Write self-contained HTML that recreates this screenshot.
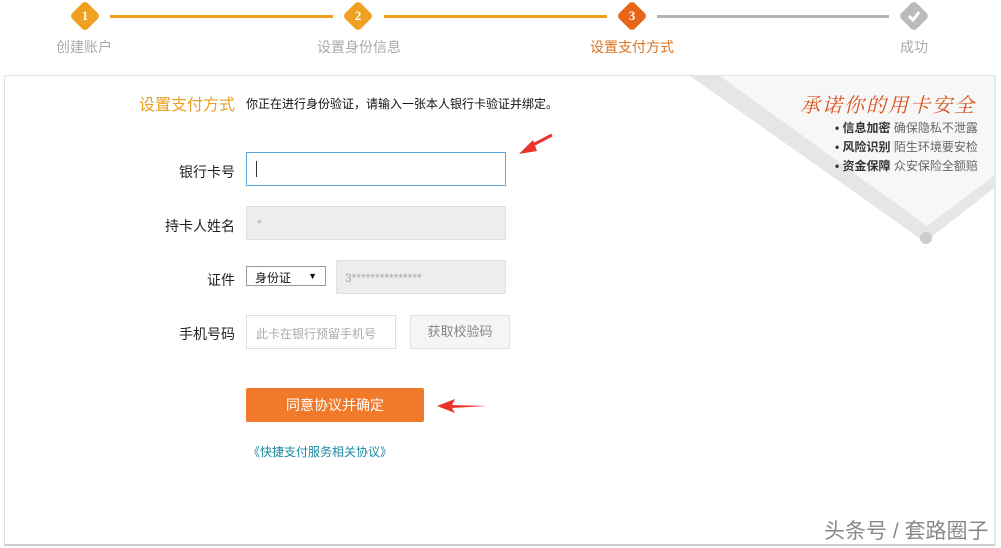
<!DOCTYPE html>
<html><head><meta charset="utf-8"><style>
body{margin:0;width:1001px;height:548px;background:#fff;font-family:"Liberation Sans","Noto Sans CJK SC",sans-serif;position:relative;overflow:hidden}
.a{position:absolute}
.lbl{position:absolute;font-size:14px;color:#222;text-align:right;width:100px;left:135px}
.step{position:absolute;font-size:14px;top:37px}
.dia{position:absolute;width:22px;height:22px;transform:rotate(45deg);border-radius:4px}
.num{position:absolute;width:30px;text-align:center;color:#fff;font-weight:bold;font-size:13px;top:8px;font-family:"Liberation Serif",serif}
.inp{position:absolute;box-sizing:border-box;border:1px solid #ddd}
</style></head><body>
<div class="a" style="left:110px;top:15px;width:223px;height:3px;background:#f0a020"></div>
<div class="a" style="left:384px;top:15px;width:223px;height:3px;background:#f0a020"></div>
<div class="a" style="left:657px;top:15px;width:232px;height:3px;background:#b5b5b5"></div>
<div class="dia" style="left:74px;top:5px;background:#f0a020"></div><div class="num" style="left:70px">1</div>
<div class="dia" style="left:347px;top:5px;background:#f0a020"></div><div class="num" style="left:343px">2</div>
<div class="dia" style="left:621px;top:5px;background:#e8661a"></div><div class="num" style="left:617px">3</div>
<div class="dia" style="left:903px;top:5px;background:#bbb"></div>
<svg class="a" style="left:906px;top:8px" width="16" height="16"><path d="M3 8 L7 12 L13 4" stroke="#fff" stroke-width="3" fill="none"/></svg>
<div class="step" style="left:56px;color:#aaa">创建账户</div>
<div class="step" style="left:317px;color:#aaa">设置身份信息</div>
<div class="step" style="left:590px;color:#d9731e">设置支付方式</div>
<div class="step" style="left:900px;color:#aaa">成功</div>
<div class="a" style="left:4px;top:75px;width:989px;height:468px;border:1px solid #e2e2e2;border-bottom:2px solid #ccc;border-right:2px solid #e8e8e8"></div>
<svg class="a" style="left:680px;top:76px" width="314" height="175">
<polygon points="10,0 314,0 314,100 245,160" fill="#f7f7f7"/>
<polygon points="10,0 40,0 247,150 314,100 314,112 245,166" fill="#e6e6e6"/>
<circle cx="246" cy="162" r="6" fill="#ccc"/>
</svg>
<div class="a" style="left:800px;top:89px;font-size:20px;color:#d9531e;letter-spacing:2px;font-family:'Noto Serif CJK SC',serif;font-style:italic">承诺你的用卡安全</div>
<div class="a" style="left:835px;top:119px;font-size:12px;line-height:19px;color:#666"><b style="color:#333">• 信息加密</b> 确保隐私不泄露<br><b style="color:#333">• 风险识别</b> 陌生环境要安检<br><b style="color:#333">• 资金保障</b> 众安保险全额赔</div>
<div class="a" style="left:139px;top:91px;font-size:16px;color:#e8a020">设置支付方式</div>
<div class="a" style="left:246px;top:95px;font-size:12px;color:#111">你正在进行身份验证，请输入一张本人银行卡验证并绑定。</div>
<div class="lbl" style="top:162px">银行卡号</div>
<div class="inp" style="left:246px;top:152px;width:260px;height:34px;border:1px solid #5aa8e0"><div class="a" style="left:9px;top:8px;width:1px;height:16px;background:#333"></div></div>
<svg class="a" style="left:515px;top:132px" width="40" height="26"><path d="M37 3 L12 16" stroke="#e8342a" stroke-width="3"/><polygon points="4,22 18,8 22,19" fill="#e8342a"/></svg>
<div class="lbl" style="top:216px">持卡人姓名</div>
<div class="inp" style="left:246px;top:206px;width:260px;height:34px;background:#ededed;border-color:#e0e0e0;color:#aaa;font-size:12px;padding:10px">*</div>
<div class="lbl" style="top:270px">证件</div>
<div class="inp" style="left:246px;top:266px;width:80px;height:20px;border-color:#999;font-size:12px;padding:2px 8px;color:#111">身份证<span style="float:right;font-size:9px;margin-top:2px">▼</span></div>
<div class="inp" style="left:336px;top:260px;width:170px;height:34px;background:#ededed;border-color:#e0e0e0;color:#aaa;font-size:12px;padding:10px 8px">3***************</div>
<div class="lbl" style="top:324px">手机号码</div>
<div class="inp" style="left:246px;top:315px;width:150px;height:34px;color:#aaa;font-size:12px;padding:9px 9px;white-space:nowrap;overflow:hidden">此卡在银行预留手机号</div>
<div class="inp" style="left:410px;top:315px;width:100px;height:34px;background:#f5f5f5;border-color:#e3e3e3;color:#888;font-size:13px;text-align:center;line-height:32px">获取校验码</div>
<div class="a" style="left:246px;top:388px;width:178px;height:34px;background:#f07a2a;border-radius:2px;color:#fff;font-size:14px;text-align:center;line-height:34px">同意协议并确定</div>
<svg class="a" style="left:435px;top:397px" width="55" height="18"><polygon points="2,9 20,2 17,8 52,9 17,11 20,16" fill="#e8342a"/></svg>
<div class="a" style="left:248px;top:443px;font-size:12px;color:#1a8aa0">《快捷支付服务相关协议》</div>
<div class="a" style="left:824px;top:515px;font-size:21px;color:#888">头条号 / 套路圈子</div>
</body></html>
